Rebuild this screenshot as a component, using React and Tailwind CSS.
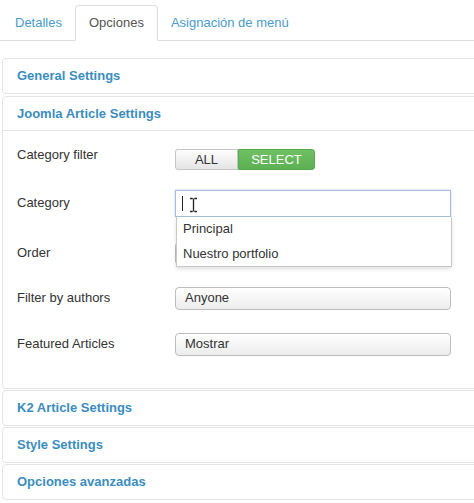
import React from "react";

const Tab = ({ label, active }) => (
  <div
    className={
      active
        ? "mt-[5px] -mb-px h-[36px] px-[13px] flex items-center rounded-t-[4px] border border-[#ddd] border-b-white bg-white text-[#555]"
        : "mt-[5px] h-[36px] px-[13px] flex items-center text-[#4b9bcb]"
    }
  >
    {label}
  </div>
);

const PanelHeader = ({ title, bordered }) => (
  <div
    className={`h-[34px] flex items-center pl-[14px] font-bold text-[#3b8dbf] ${
      bordered ? "border-b border-[#e4e4e4]" : ""
    }`}
  >
    {title}
  </div>
);

const Panel = ({ title, gap = "mb-px", children }) => (
  <div className={`${gap} mr-[-12px] rounded-[4px] border border-[#e4e4e4] bg-white`}>
    <PanelHeader title={title} bordered={!!children} />
    {children}
  </div>
);

const Row = ({ label, h, children }) => (
  <div className={`${h} flex items-center`}>
    <div className="w-[172px] pl-[14px] text-[#333]">{label}</div>
    <div className="w-[276px]">{children}</div>
  </div>
);

const SelectBox = ({ value }) => (
  <div className="h-[23px] flex items-center pl-[9px] rounded-[4px] border border-[#bdbdbd] bg-gradient-to-b from-white to-[#ececec] text-[#333] shadow-[inset_0_1px_0_#fff]">
    {value}
  </div>
);

// text cursor drawn next to the caret
const IBeam = () => (
  <svg width="9" height="16" viewBox="0 0 9 16" className="ml-[6px] mt-[3px]">
    <path d="M1 1.5h2.5M5.5 1.5H8M4.5 2v12M1 14.5h2.5M5.5 14.5H8" stroke="#222" strokeWidth="1.3" fill="none" />
    <path d="M3.5 1.5c.6 0 1 .3 1 1M5.5 1.5c-.6 0-1 .3-1 1M3.5 14.5c.6 0 1-.3 1-1M5.5 14.5c-.6 0-1-.3-1-1" stroke="#222" strokeWidth="1" fill="none" />
  </svg>
);

export default function App() {
  return (
    <div className="w-[474px] h-[503px] overflow-hidden bg-white font-['Liberation_Sans',Arial,sans-serif] text-[13px]">
      <div className="flex h-[41px] pl-[2px] border-b border-[#ddd]">
        <Tab label="Detalles" />
        <Tab label="Opciones" active />
        <Tab label="Asignación de menú" />
      </div>

      <div className="pt-[17px] pl-[2px]">
        <Panel title="General Settings" gap="mb-[2px]" />

        <Panel title="Joomla Article Settings">
          <div className="pt-[4px] pb-[21px]">
            <Row label="Category filter" h="h-[40px]">
              <div className="flex h-[21px] mt-[9px] text-[13px]">
                <div className="w-[63px] flex items-center justify-center rounded-l-[3px] border border-[#c4c4c4] bg-gradient-to-b from-white to-[#e4e4e4] text-[#333]">
                  ALL
                </div>
                <div className="w-[77px] flex items-center justify-center rounded-r-[3px] border border-[#58a94f] bg-gradient-to-b from-[#6fc063] to-[#5cb152] text-white">
                  SELECT
                </div>
              </div>
            </Row>

            <Row label="Category" h="h-[56px]">
              <div className="relative">
                <div className="h-[27px] flex items-center pl-[6px] border border-[#a9bedf] bg-white shadow-[0_0_2px_rgba(82,130,200,0.4)]">
                  <div className="w-px h-[15px] bg-[#222]" />
                  <IBeam />
                </div>
                <div className="absolute z-10 top-full left-px w-[276px] h-[50px] border border-[#c8c8c8] border-t-0 bg-white text-[#333] shadow-[0_2px_4px_rgba(0,0,0,0.12)]">
                  <div className="h-[25px] flex items-center pl-[6px]">Principal</div>
                  <div className="h-[25px] flex items-center pl-[6px]">Nuestro portfolio</div>
                </div>
              </div>
            </Row>

            <Row label="Order" h="h-[44px]">
              <SelectBox value="" />
            </Row>

            <Row label="Filter by authors" h="h-[46px]">
              <SelectBox value="Anyone" />
            </Row>

            <Row label="Featured Articles" h="h-[46px]">
              <SelectBox value="Mostrar" />
            </Row>
          </div>
        </Panel>

        <Panel title="K2 Article Settings" />
        <Panel title="Style Settings" />
        <Panel title="Opciones avanzadas" />
      </div>
    </div>
  );
}
